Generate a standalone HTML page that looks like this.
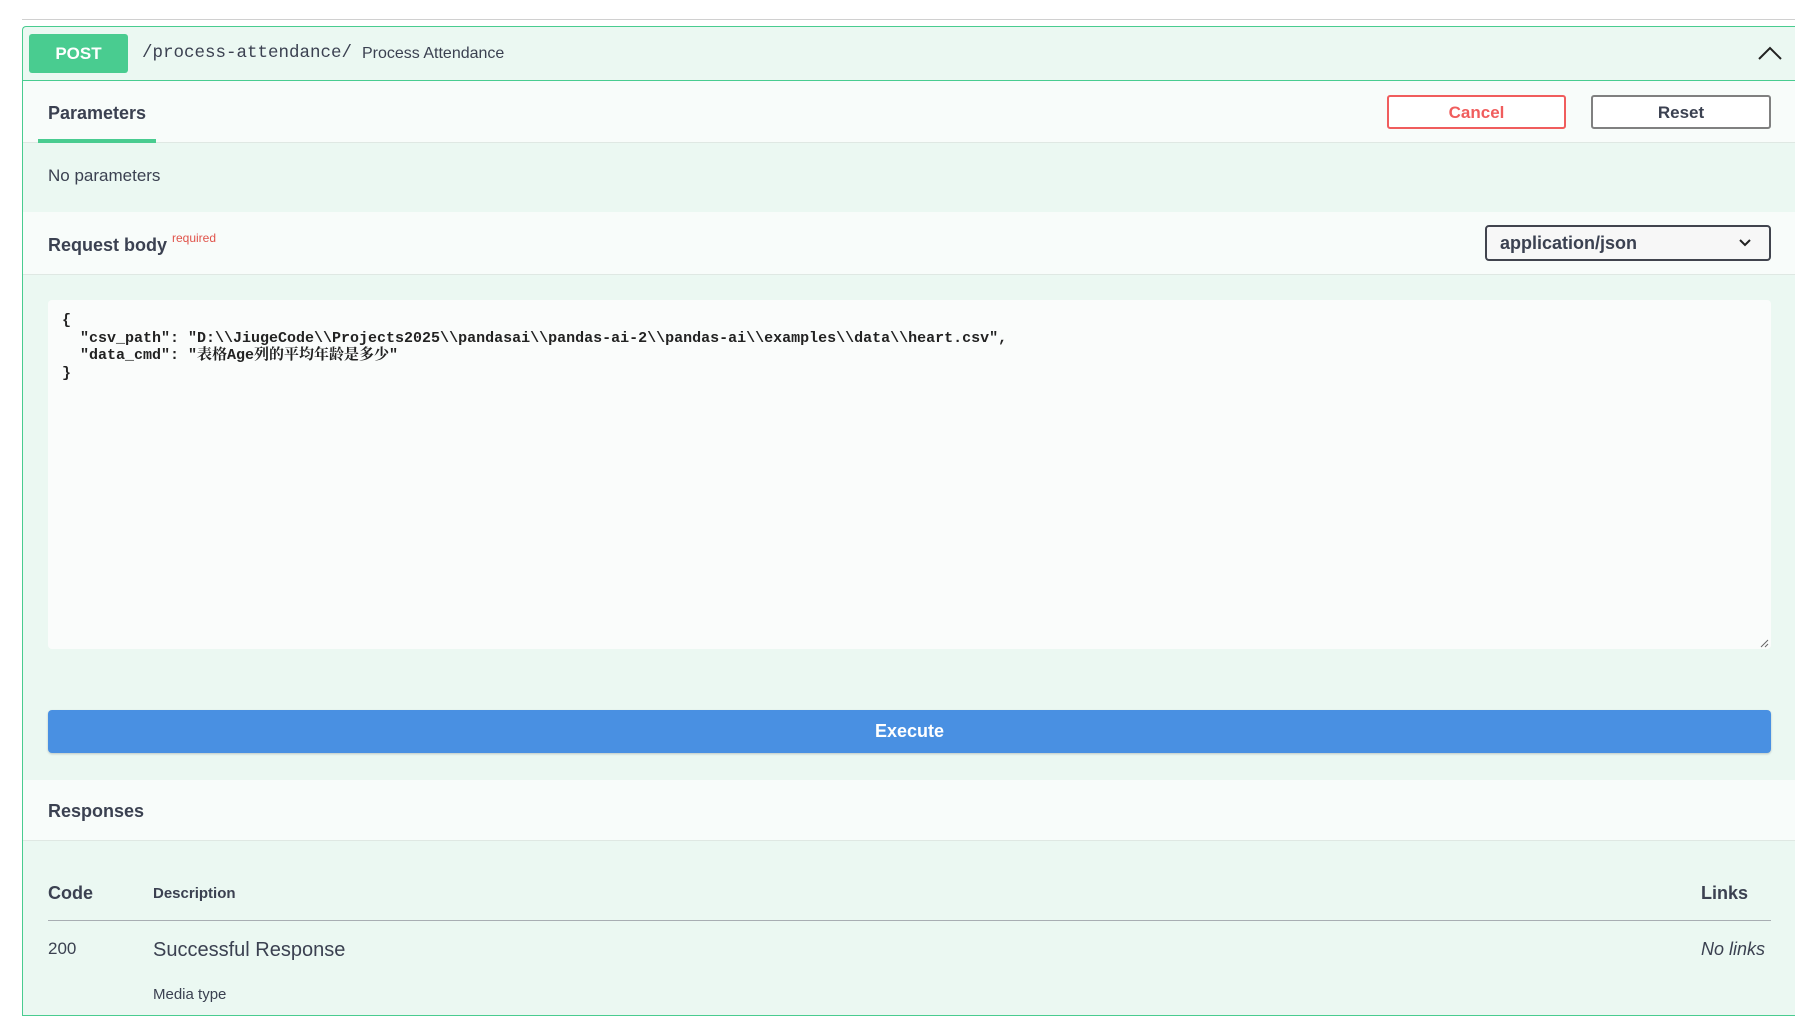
<!DOCTYPE html>
<html><head><meta charset="utf-8"><style>
*{margin:0;padding:0;box-sizing:border-box}
body{width:1795px;height:1004px;overflow:hidden;background:#fff;font-family:"Liberation Sans","Noto Sans CJK SC",sans-serif;color:#3b4151;position:relative}
.a{position:absolute}
.t{position:absolute;white-space:nowrap}
</style></head><body>
<div class="a" style="left:22px;top:19px;width:1773px;height:1px;background:#d0d0d0"></div>
<div class="a" style="left:22px;top:26px;width:1780px;height:990px;background:#ebf8f2;border:1px solid #49cc90;border-right:none;border-radius:4px 0 0 0"></div>
<div class="a" style="left:23px;top:80px;width:1772px;height:1px;background:#49cc90"></div>
<div class="a" style="left:29px;top:34px;width:99px;height:39px;background:#49cc90;border-radius:3px;color:#fff;font-weight:bold;font-size:17px;text-align:center;line-height:39px">POST</div>
<div class="t" style="left:142px;top:43px;font-family:'Liberation Mono',monospace;font-size:17.5px;color:#3b4151">/process-attendance/</div>
<div class="t" style="left:362px;top:45px;font-size:16px;color:#3b4151">Process Attendance</div>
<svg class="a" style="left:1757px;top:44px" width="26" height="17"><path d="M2 15 L13 4 L24 15" fill="none" stroke="#222" stroke-width="2"/></svg>
<div class="a" style="left:23px;top:81px;width:1772px;height:62px;background:#f8fcfa;border-bottom:1px solid #dfe8e3"></div>
<div class="t" style="left:48px;top:103px;font-size:18px;font-weight:bold">Parameters</div>
<div class="a" style="left:38px;top:139px;width:118px;height:4px;background:#49cc90"></div>
<div class="a" style="left:1387px;top:95px;width:179px;height:34px;border:2px solid #f05d5d;border-radius:3px;color:#f05d5d;font-weight:bold;font-size:17px;text-align:center;line-height:31px;background:#fff">Cancel</div>
<div class="a" style="left:1591px;top:95px;width:180px;height:34px;border:2px solid #808080;border-radius:3px;color:#3b4151;font-weight:bold;font-size:17px;text-align:center;line-height:31px;background:#fff">Reset</div>
<div class="t" style="left:48px;top:166px;font-size:17px">No parameters</div>
<div class="a" style="left:23px;top:212px;width:1772px;height:63px;background:#f8fcfa;border-bottom:1px solid #dfe8e3"></div>
<div class="t" style="left:48px;top:235px;font-size:18px;font-weight:bold">Request body</div>
<div class="t" style="left:172px;top:231px;font-size:12px;color:#e0534a">required</div>
<div class="a" style="left:1485px;top:225px;width:286px;height:36px;border:2px solid #41444e;border-radius:4px;background:#f7f7f7;font-size:18px;font-weight:bold;line-height:32px;padding-left:13px">application/json</div>
<svg class="a" style="left:1738px;top:238px" width="14" height="10"><path d="M2 2 L7 7 L12 2" fill="none" stroke="#222" stroke-width="2"/></svg>
<div class="a" style="left:48px;top:300px;width:1723px;height:349px;background:#fafcfb;border-radius:4px"></div>
<pre class="a" style="left:62px;top:312px;white-space:pre;font-family:'Liberation Mono','Noto Serif CJK SC',monospace;font-size:15px;line-height:17.5px;color:#222;font-weight:bold">{
  "csv_path": "D:\\JiugeCode\\Projects2025\\pandasai\\pandas-ai-2\\pandas-ai\\examples\\data\\heart.csv",
  "data_cmd": "表格Age列的平均年龄是多少"
}</pre>
<svg class="a" style="left:1759px;top:638px" width="10" height="10"><path d="M2 9 L9 2 M6 9 L9 6" stroke="#666" stroke-width="1"/></svg>
<div class="a" style="left:48px;top:710px;width:1723px;height:43px;background:#4990e2;border-radius:4px;color:#fff;font-weight:bold;font-size:18px;text-align:center;line-height:43px;box-shadow:0 1px 2px rgba(0,0,0,.2)">Execute</div>
<div class="a" style="left:23px;top:780px;width:1772px;height:61px;background:#f8fcfa;border-bottom:1px solid #dfe8e3"></div>
<div class="t" style="left:48px;top:801px;font-size:18px;font-weight:bold">Responses</div>
<div class="t" style="left:48px;top:883px;font-size:18px;font-weight:bold">Code</div>
<div class="t" style="left:153px;top:885px;font-size:15px;font-weight:bold">Description</div>
<div class="t" style="left:1701px;top:883px;font-size:18px;font-weight:bold">Links</div>
<div class="a" style="left:48px;top:920px;width:1723px;height:1px;background:#a8aeb3"></div>
<div class="t" style="left:48px;top:939px;font-size:17px">200</div>
<div class="t" style="left:153px;top:939px;font-size:20px">Successful Response</div>
<div class="t" style="left:1701px;top:939px;font-size:18px;font-style:italic">No links</div>
<div class="t" style="left:153px;top:986px;font-size:15px">Media type</div>
</body></html>
